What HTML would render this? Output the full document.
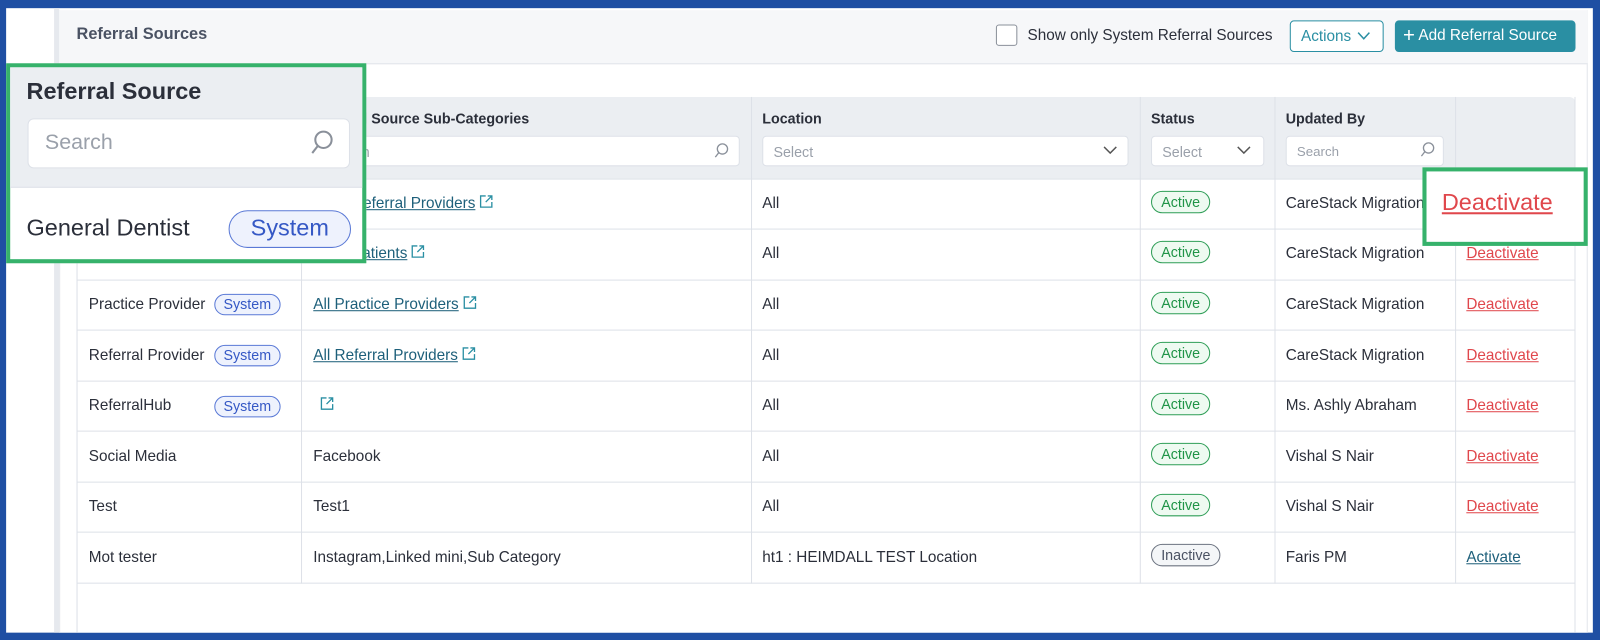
<!DOCTYPE html>
<html><head><meta charset="utf-8"><style>
*{box-sizing:border-box;margin:0;padding:0}
body{width:1600px;height:640px;overflow:hidden;background:#1f4fa3;font-family:"Liberation Sans",Arial,sans-serif;color:#2b2f3a;position:relative}
#w{position:absolute;left:0;top:0;width:1568px;height:627px;transform:scale(1.0204);transform-origin:0 0}
.a{position:absolute}
.inner{left:6px;top:8px;width:1555px;height:612px;background:#fff}
.strip{left:53px;top:8px;width:5px;height:612px;background:#e6e9ee}
.panel{left:58px;top:10px;width:1498px;height:610px;background:#fff;border-left:1px solid #e3e6eb;border-right:1px solid #e3e6eb}
.ph{left:58px;top:10px;width:1498px;height:53px;background:#f6f7f9;border-bottom:1px solid #e1e4ea}
.t{font-size:15px;white-space:nowrap}
.hdr{left:75px;top:95px;width:1469px;height:80px;background:#ebeef2;border-top-left-radius:6px;border-top-right-radius:6px}
.vl{width:1px;background:#dde1e8;top:95px;height:477px}
.hl{height:1px;background:#dde1e8;left:75px;width:1469px}
.inp{background:#fff;border:1px solid #dde1e8;border-radius:4px;height:30px;top:133px;font-size:14px;color:#9aa0aa;padding:7px 10px}
.pill{border:1px solid #2f9e57;color:#1f9447;background:#eefaf1;border-radius:11px;font-size:14px;padding:2px 9px;line-height:16px}
.sys{border:1px solid #5a79d6;color:#3558c5;background:#eef2fd;border-radius:11px;font-size:14px;padding:1px 8px;line-height:17px}
.lk{color:#1d5f7a;text-decoration:underline;font-size:15px}
.dr{color:#e0474c;text-decoration:underline;font-size:15px}
</style></head><body>
<div id="w">
<div class="a inner"></div>
<div class="a strip"></div>
<div class="a panel"></div>
<div class="a ph"></div>
<div class="a t" style="left:75px;top:25px;font-size:16px;font-weight:bold;color:#4a5263">Referral Sources</div>
<div class="a" style="left:976px;top:24px;width:21px;height:21px;border:1.5px solid #8a909a;border-radius:3px;background:#fff"></div>
<div class="a t" style="left:1007px;top:26px;color:#2b2f3a">Show only System Referral Sources</div>
<div class="a" style="left:1264px;top:20px;width:92px;height:31px;border:1px solid #2a8fa3;border-radius:4px;background:#fff;color:#2a8fa3;font-size:15px;padding:6px 10px;white-space:nowrap">Actions <svg width="13" height="9" viewBox="0 0 13 9" style="margin-left:2px"><path d="M1 1l5.5 6L12 1" fill="none" stroke="#2a8fa3" stroke-width="1.5"/></svg></div>
<div class="a" style="left:1367px;top:20px;width:177px;height:31px;border-radius:4px;background:#2a8fa3;color:#fff;font-size:15px;padding:6px 8px;white-space:nowrap"><span style="font-size:20px;line-height:15px;position:relative;top:2px">+</span> Add Referral Source</div>

<div class="a hdr"></div>
<div class="a t" style="left:307px;top:108px;font-weight:bold;font-size:14px">Referral Source Sub-Categories</div>
<div class="a t" style="left:747px;top:108px;font-weight:bold;font-size:14px">Location</div>
<div class="a t" style="left:1128px;top:108px;font-weight:bold;font-size:14px">Status</div>
<div class="a t" style="left:1260px;top:108px;font-weight:bold;font-size:14px">Updated By</div>
<div class="a inp" style="left:307px;width:418px">Search</div>
<svg class="a" style="left:700px;top:140px" width="14" height="16"><circle cx="8" cy="6" r="5" fill="none" stroke="#8a909a" stroke-width="1.3"/><path d="M4.5 9.5L1 14" stroke="#8a909a" stroke-width="1.3"/></svg>
<div class="a inp" style="left:747px;width:359px">Select</div>
<svg class="a" style="left:1081px;top:143px" width="14" height="9"><path d="M1 1l6 6 6-6" fill="none" stroke="#555" stroke-width="1.4"/></svg>
<div class="a inp" style="left:1128px;width:111px">Select</div>
<svg class="a" style="left:1212px;top:143px" width="14" height="9"><path d="M1 1l6 6 6-6" fill="none" stroke="#555" stroke-width="1.4"/></svg>
<div class="a inp" style="left:1260px;width:155px;font-size:13px">Search</div>
<svg class="a" style="left:1392px;top:139px" width="14" height="16"><circle cx="8" cy="6" r="5" fill="none" stroke="#8a909a" stroke-width="1.3"/><path d="M4.5 9.5L1 14" stroke="#8a909a" stroke-width="1.3"/></svg>

<div class="a vl" style="left:75px;height:525px"></div>
<div class="a vl" style="left:295px"></div>
<div class="a vl" style="left:736px"></div>
<div class="a vl" style="left:1117px"></div>
<div class="a vl" style="left:1249px"></div>
<div class="a vl" style="left:1426px"></div>
<div class="a vl" style="left:1543px;height:525px"></div>
<div class="a hl" style="top:175px"></div>
<div class="a hl" style="top:224px"></div>
<div class="a hl" style="top:274px"></div>
<div class="a hl" style="top:323px"></div>
<div class="a hl" style="top:373px"></div>
<div class="a hl" style="top:422px"></div>
<div class="a hl" style="top:472px"></div>
<div class="a hl" style="top:521px"></div>
<div class="a hl" style="top:571px"></div>

<div class="a t" style="left:345px;top:191px"><span class="lk">Referral Providers</span> <svg width="13" height="13"><path d="M6 1H1v11h11V7M8 1h4v4M12 1L6 7" fill="none" stroke="#2a8fa3" stroke-width="1.3"/></svg></div>
<div class="a t" style="left:345px;top:240px"><span class="lk">Patients</span> <svg width="13" height="13"><path d="M6 1H1v11h11V7M8 1h4v4M12 1L6 7" fill="none" stroke="#2a8fa3" stroke-width="1.3"/></svg></div>
<div class="a t" style="left:87px;top:290px">Practice Provider</div><div class="a sys" style="left:210px;top:288px">System</div>
<div class="a t" style="left:307px;top:290px"><span class="lk">All Practice Providers</span> <svg width="13" height="13"><path d="M6 1H1v11h11V7M8 1h4v4M12 1L6 7" fill="none" stroke="#2a8fa3" stroke-width="1.3"/></svg></div>
<div class="a t" style="left:87px;top:340px">Referral Provider</div><div class="a sys" style="left:210px;top:338px">System</div>
<div class="a t" style="left:307px;top:340px"><span class="lk">All Referral Providers</span> <svg width="13" height="13"><path d="M6 1H1v11h11V7M8 1h4v4M12 1L6 7" fill="none" stroke="#2a8fa3" stroke-width="1.3"/></svg></div>
<div class="a t" style="left:87px;top:389px">ReferralHub</div><div class="a sys" style="left:210px;top:388px">System</div>
<svg class="a" style="left:314px;top:389px" width="13" height="13"><path d="M6 1H1v11h11V7M8 1h4v4M12 1L6 7" fill="none" stroke="#2a8fa3" stroke-width="1.3"/></svg>
<div class="a t" style="left:87px;top:439px">Social Media</div><div class="a t" style="left:307px;top:439px">Facebook</div>
<div class="a t" style="left:87px;top:488px">Test</div><div class="a t" style="left:307px;top:488px">Test1</div>
<div class="a t" style="left:87px;top:538px">Mot tester</div><div class="a t" style="left:307px;top:538px">Instagram,Linked mini,Sub Category</div>

<div class="a t" style="left:747px;top:191px">All</div>
<div class="a t" style="left:747px;top:240px">All</div>
<div class="a t" style="left:747px;top:290px">All</div>
<div class="a t" style="left:747px;top:340px">All</div>
<div class="a t" style="left:747px;top:389px">All</div>
<div class="a t" style="left:747px;top:439px">All</div>
<div class="a t" style="left:747px;top:488px">All</div>
<div class="a t" style="left:747px;top:538px">ht1 : HEIMDALL TEST Location</div>

<div class="a pill" style="left:1128px;top:187px">Active</div>
<div class="a pill" style="left:1128px;top:236px">Active</div>
<div class="a pill" style="left:1128px;top:286px">Active</div>
<div class="a pill" style="left:1128px;top:335px">Active</div>
<div class="a pill" style="left:1128px;top:385px">Active</div>
<div class="a pill" style="left:1128px;top:434px">Active</div>
<div class="a pill" style="left:1128px;top:484px">Active</div>
<div class="a pill" style="left:1128px;top:533px;border-color:#6c7380;color:#4a5263;background:#f4f6f8">Inactive</div>

<div class="a t" style="left:1260px;top:191px">CareStack Migration</div>
<div class="a t" style="left:1260px;top:240px">CareStack Migration</div>
<div class="a t" style="left:1260px;top:290px">CareStack Migration</div>
<div class="a t" style="left:1260px;top:340px">CareStack Migration</div>
<div class="a t" style="left:1260px;top:389px">Ms. Ashly Abraham</div>
<div class="a t" style="left:1260px;top:439px">Vishal S Nair</div>
<div class="a t" style="left:1260px;top:488px">Vishal S Nair</div>
<div class="a t" style="left:1260px;top:538px">Faris PM</div>

<div class="a dr" style="left:1437px;top:240px">Deactivate</div>
<div class="a dr" style="left:1437px;top:290px">Deactivate</div>
<div class="a dr" style="left:1437px;top:340px">Deactivate</div>
<div class="a dr" style="left:1437px;top:389px">Deactivate</div>
<div class="a dr" style="left:1437px;top:439px">Deactivate</div>
<div class="a dr" style="left:1437px;top:488px">Deactivate</div>
<div class="a lk" style="left:1437px;top:538px">Activate</div>

<div class="a" style="left:6px;top:62px;width:353px;height:196px;border:4px solid #36b26b;background:#fff"></div>
<div class="a" style="left:10px;top:66px;width:345px;height:118px;background:#ebeef2;border-bottom:1px solid #dde1e8"></div>
<div class="a t" style="left:26px;top:76px;font-size:23px;font-weight:bold;color:#2b2f3a">Referral Source</div>
<div class="a" style="left:27px;top:116px;width:316px;height:49px;background:#fff;border:1px solid #dde1e8;border-radius:6px;font-size:21px;color:#9aa0aa;padding:11px 16px">Search</div>
<svg class="a" style="left:302px;top:126px" width="26" height="28"><circle cx="15" cy="11" r="8" fill="none" stroke="#8a909a" stroke-width="2"/><path d="M9.5 17L4 24" stroke="#8a909a" stroke-width="2"/></svg>
<div class="a t" style="left:26px;top:210px;font-size:23px;color:#2b2f3a">General Dentist</div>
<div class="a" style="left:224px;top:206px;width:120px;height:37px;border:1.5px solid #5a79d6;background:#eef2fd;border-radius:19px;color:#3558c5;font-size:23px;text-align:center;line-height:33px">System</div>

<div class="a" style="left:1394px;top:164px;width:162px;height:77px;border:4px solid #36b26b;background:#fff"></div>
<div class="a dr" style="left:1413px;top:185px;font-size:23px">Deactivate</div>
</div>
</body></html>
